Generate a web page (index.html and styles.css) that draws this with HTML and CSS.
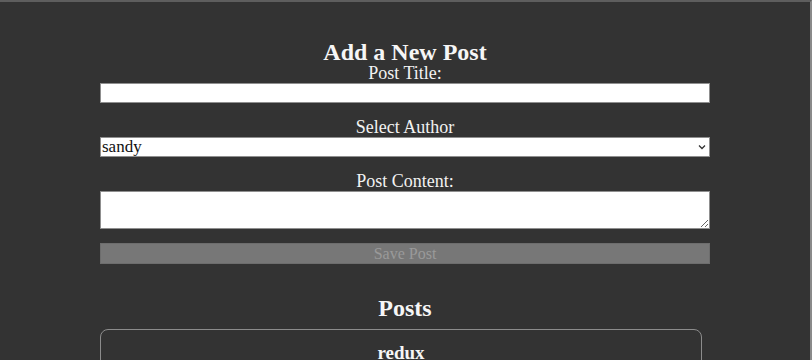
FILE: index.html
```html
<!DOCTYPE html>
<html lang="en">
<head>
<meta charset="utf-8">
<title>Posts</title>
<link rel="stylesheet" href="styles.css">
</head>
<body>
<div class="app">
  <main class="main">
    <section class="add-post">
      <h2 class="heading">Add a New Post</h2>
      <form class="post-form">
        <div class="field">
          <label class="label" for="postTitle">Post Title:</label>
          <input class="input" type="text" id="postTitle" name="postTitle">
        </div>
        <div class="field">
          <label class="label" for="postAuthor">Select Author</label>
          <select class="input select" id="postAuthor" name="postAuthor">
            <option>sandy</option>
          </select>
        </div>
        <div class="field">
          <label class="label" for="postContent">Post Content:</label>
          <textarea class="input textarea" id="postContent" name="postContent"></textarea>
        </div>
        <button class="save" type="button" disabled>Save Post</button>
      </form>
    </section>
    <section class="posts">
      <h2 class="heading posts-heading">Posts</h2>
      <article class="card">
        <h3 class="card-title">redux</h3>
      </article>
    </section>
  </main>
</div>
</body>
</html>
```

FILE: styles.css
```css
html, body {
  margin: 0;
  padding: 0;
  height: 100%;
}

body {
  background: #333333;
  color: #f4f4f4;
  font-family: "Liberation Serif", "Times New Roman", serif;
  overflow: hidden;
}

.app {
  min-height: 100%;
  border-top: 2px solid #5e5e5e;
  border-right: 2px solid #8a8a8a;
  box-sizing: border-box;
}

.main {
  width: 610px;
  margin: 0 auto;
  padding-top: 39px;
}

.heading {
  margin: 0;
  font-size: 24px;
  line-height: 22px;
  font-weight: bold;
  text-align: center;
  color: #f6f6f6;
}

.post-form {
  display: flex;
  flex-direction: column;
  gap: 14px;
}

.field {
  display: flex;
  flex-direction: column;
}

.label {
  font-size: 18px;
  line-height: 20px;
  text-align: center;
  color: #f2f2f2;
}

.input {
  box-sizing: border-box;
  width: 100%;
  height: 20px;
  margin: 0;
  border: 1px solid #8f8f8f;
  border-radius: 0;
  background: #ffffff;
  font-family: "Liberation Serif", "Times New Roman", serif;
  font-size: 17px;
  color: #111;
  padding: 0 2px;
}

.select {
  -webkit-appearance: none;
  appearance: none;
  padding: 0 0 0 1px;
  line-height: 18px;
  background-image: url("data:image/svg+xml,%3Csvg xmlns='http://www.w3.org/2000/svg' width='8' height='6' viewBox='0 0 8 6'%3E%3Cpath d='M1 1.5l3 3 3-3' fill='none' stroke='%23333' stroke-width='1.3'/%3E%3C/svg%3E");
  background-repeat: no-repeat;
  background-position: right 3px center;
}

.textarea {
  height: 38px;
  resize: vertical;
}

.save {
  height: 21px;
  margin: 0;
  padding: 0;
  border: 1px solid #6d6d6d;
  background: #777777;
  color: #9a9a9a;
  font-family: "Liberation Serif", "Times New Roman", serif;
  font-size: 16px;
  line-height: 19px;
}

.posts {
  margin-top: 33px;
}

.posts-heading {
  line-height: 22px;
  margin-bottom: 10px;
}

.card {
  width: 602px;
  box-sizing: border-box;
  border: 1px solid #8c8c8c;
  border-radius: 8px;
  padding: 12px 16px 20px;
}

.card-title {
  margin: 0;
  font-size: 19px;
  font-weight: bold;
  text-align: center;
  color: #f6f6f6;
}
```
